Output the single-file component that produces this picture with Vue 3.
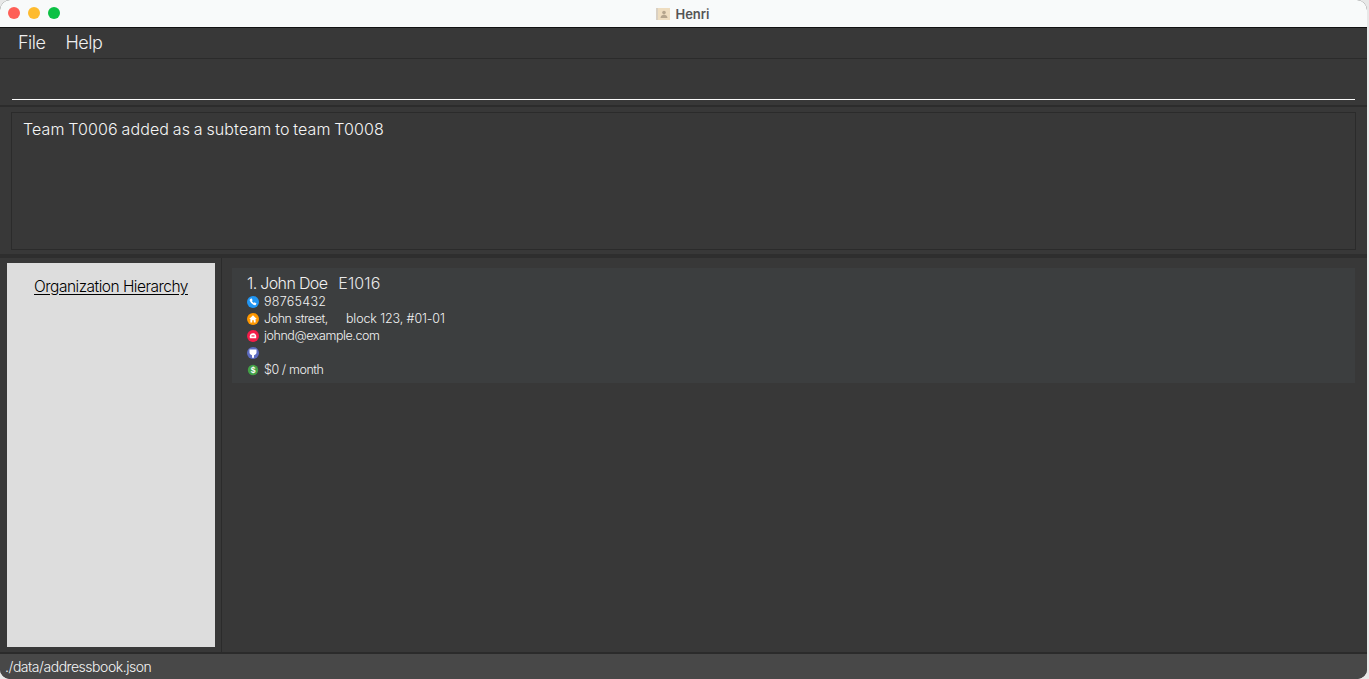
<template>
  <div class="desktop">
    <div class="window">
      <header class="titlebar">
        <div class="lights">
          <span class="light red"></span>
          <span class="light yellow"></span>
          <span class="light green"></span>
        </div>
        <div class="title">
          <svg class="app-icon" width="14" height="14" viewBox="0 0 14 14">
            <rect x="0" y="1" width="14" height="12" fill="#d9d0c3" />
            <rect x="2" y="1" width="12" height="12" fill="#eeddc0" />
            <circle cx="8" cy="5.6" r="1.8" fill="#b5a58d" />
            <path d="M4.5 11c.3-2.2 1.6-3.2 3.5-3.2s3.2 1 3.5 3.2z" fill="#b5a58d" />
          </svg>
          <span>Henri</span>
        </div>
      </header>

      <nav class="menubar">
        <span class="menu-item">File</span>
        <span class="menu-item">Help</span>
      </nav>

      <section class="command">
        <div class="command-line"></div>
      </section>

      <section class="result">
        <div class="result-box">Team T0006 added as a subteam to team T0008</div>
      </section>

      <main class="content">
        <aside class="side">
          <div class="side-panel"><span class="side-title">Organization Hierarchy</span></div>
        </aside>
        <section class="list">
          <article class="card">
            <div class="card-name">1. John Doe<span class="card-id">E1016</span></div>
            <div class="row">
              <svg class="ico" viewBox="0 0 12 12">
                <circle cx="6" cy="6" r="6" fill="#2196f3" />
                <path d="M3 3.200l1.500-.9 1.200 2-.8.8c.3.8 1 1.500 1.900 1.900l.8-.8 1.900 1.300-.8 1.400c-.6.4-1.500.3-2.400-.2C4.700 7.700 3.400 6.300 2.800 4.800c-.3-.6-.2-1.200.2-1.600z" fill="#fff" />
              </svg>
              <span class="num">98765432</span>
            </div>
            <div class="row">
              <svg class="ico" viewBox="0 0 12 12">
                <circle cx="6" cy="6" r="6" fill="#ff9800" />
                <path d="M6 2.300L2.200 6H3.400V9.400H5.200V7.200H6.800V9.400H8.600V6H9.800z" fill="#fff" />
              </svg>
              <span><span class="tight">John street,</span><span class="addr-gap"></span><span class="block">block 123, #01-01</span></span>
            </div>
            <div class="row">
              <svg class="ico" viewBox="0 0 12 12">
                <circle cx="6" cy="6" r="6" fill="#f41c49" />
                <path d="M2.800 6.200C2.800 4.400 4.200 3.300 6 3.300s3.200 1.100 3.200 2.900v2.100H2.800z" fill="#fff" />
                <rect x="4.500" y="5.400" width="3" height="1.100" fill="#f41c49" />
              </svg>
              <span class="tight">johnd@example.com</span>
            </div>
            <div class="row">
              <svg class="ico" viewBox="0 0 12 12">
                <circle cx="6" cy="6" r="6" fill="#5c6bc0" />
                <path d="M2.500 2.600H9.500V5.600C9.500 6.900 8.300 7.900 7 8.200V10.800H5V8.200C3.700 7.900 2.500 6.900 2.500 5.600z" fill="#fff" />
              </svg>
            </div>
            <div class="row">
              <svg class="ico" viewBox="0 0 12 12">
                <circle cx="6" cy="6" r="5.200" fill="#43a047" />
                <text x="6" y="9" font-size="8.500" font-weight="700" text-anchor="middle" fill="#fff" font-family="Liberation Sans, sans-serif">$</text>
              </svg>
              <span class="tight">$0 / month</span>
            </div>
          </article>
        </section>
      </main>

      <footer class="status">./data/addressbook.json</footer>
    </div>
  </div>
</template>

<script setup>
</script>

<style>
html, body { margin: 0; background: #f4f5f6; overflow: hidden; }
</style>

<style scoped>
.desktop {
  width: 1369px;
  height: 679px;
  overflow: hidden;
  font-family: Inter, "Liberation Sans", sans-serif;
  background: #e8e8e8;
}
.window {
  width: 1367px;
  height: 679px;
  display: flex;
  flex-direction: column;
  border-radius: 10px;
  overflow: hidden;
  background: #383838;
}
.titlebar {
  height: 28px;
  flex: none;
  box-sizing: border-box;
  background: #f8fafa;
  border-bottom: 1px solid #111;
  display: flex;
  align-items: center;
  justify-content: center;
  position: relative;
}
.lights {
  position: absolute;
  left: 8px;
  top: 7px;
  display: flex;
  gap: 8px;
}
.light { width: 12px; height: 12px; border-radius: 50%; }
.red { background: #fe5f57; }
.yellow { background: #febb2e; }
.green { background: #0cc144; }
.title {
  display: flex;
  align-items: center;
  gap: 5px;
  font-size: 13px;
  font-weight: 600;
  color: #555;
  padding-right: 1px;
}
.menubar {
  height: 31px;
  flex: none;
  box-sizing: border-box;
  display: flex;
  align-items: center;
  gap: 20px;
  padding: 0 0 2px 18px;
  border-bottom: 1px solid #2b2b2b;
  background: #383838;
}
.menu-item { font-size: 18px; font-weight: 300; color: #f0f0f0; letter-spacing: -0.5px; }
.command {
  height: 48px;
  flex: none;
  padding: 40px 12px 0;
  box-sizing: border-box;
  background: #383838;
  border-bottom: 2px solid #2c2c2c;
}
.command-line { height: 1px; background: #fbfbfb; }
.result {
  height: 151px;
  flex: none;
  padding: 5px 11px;
  box-sizing: border-box;
  background: #383838;
  border-bottom: 4px solid #2e2e2e;
}
.result-box {
  height: 138px;
  box-sizing: border-box;
  border: 1px solid #2b2b2b;
  padding: 6px 11px;
  font-size: 16px;
  font-weight: 350;
  line-height: 20px;
  color: #f5f5f5;
  letter-spacing: 0.12px;
  word-spacing: -0.9px;
}
.content { flex: 1; display: flex; min-height: 0; }
.side {
  width: 215px;
  flex: none;
  padding: 5px 0 5px 7px;
  box-sizing: border-box;
  display: flex;
}
.side-panel {
  flex: 1;
  background: #dddddd;
  text-align: center;
  padding-top: 13px;
}
.side-title {
  font-size: 15.5px;
  font-weight: 300;
  line-height: 20px;
  color: #000;
  text-decoration: underline;
  text-underline-offset: 2px;
  letter-spacing: -0.51px;
}
.list {
  flex: 1;
  margin-left: 6px;
  border-left: 1px solid #2b2b2b;
  padding: 10px 12px 0 10px;
  box-sizing: border-box;
  background: #383838;
}
.card {
  height: 115px;
  box-sizing: border-box;
  background: #3c3e3f;
  padding: 5px 15px;
  color: #f0f0f0;
}
.card-name {
  font-size: 16px;
  font-weight: 300;
  line-height: 20px;
  letter-spacing: -0.65px;
}
.card-id { margin-left: 11px; color: #e8e8e8; letter-spacing: 0.1px; }
.row {
  height: 17px;
  display: flex;
  align-items: center;
  gap: 5px;
  font-size: 12.5px;
  font-weight: 300;
  color: #f2f2f2;
}
.num { letter-spacing: 0.27px; }
.tight { letter-spacing: -0.42px; }
.block { letter-spacing: -0.11px; }
.ico { width: 12px; height: 12px; flex: none; }
.addr-gap { display: inline-block; width: 18px; }
.status {
  height: 27px;
  flex: none;
  box-sizing: border-box;
  background: #484848;
  border-top: 2px solid #2b2b2b;
  padding-left: 5px;
  font-size: 14px;
  font-weight: 300;
  line-height: 26px;
  color: #f5f5f5;
  letter-spacing: -0.47px;
}
</style>
